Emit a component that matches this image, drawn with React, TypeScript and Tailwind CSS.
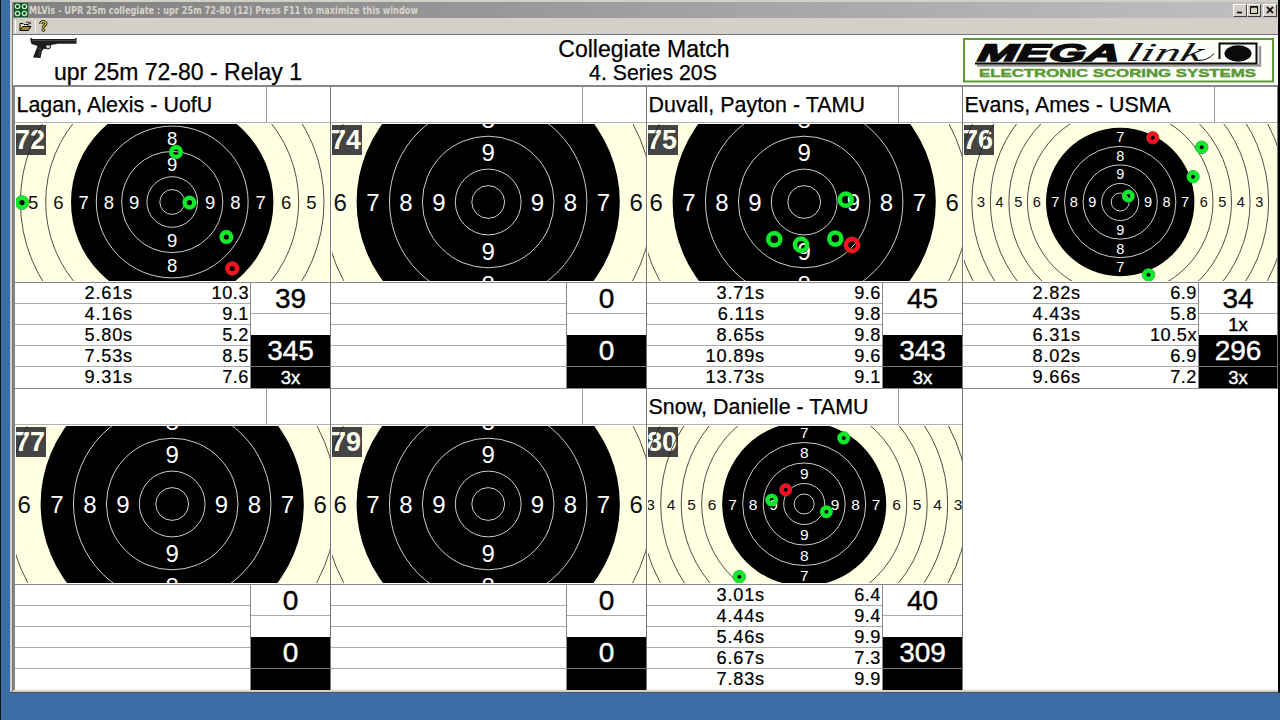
import React from "react";

type Shot = { x: number; y: number; red?: boolean };
type Row = { time: string; score: string };
type Lane = {
  id: string;
  name: string;
  step: number;
  inner: number;
  font: number;
  hole: number;
  core: number;
  shots: Shot[];
  rows: Row[];
  series: string;
  seriesX: string;
  total: string;
  totalX: string;
};

const rows = (s: string): Row[] =>
  s.split("|").map((r) => {
    const [time, score] = r.split(" ");
    return { time, score };
  });

const emptyRows: Row[] = Array.from({ length: 5 }, () => ({ time: "", score: "" }));

const emptyLane = (id: string): Lane => ({
  id, name: "", step: 32.9, inner: 16.4, font: 24, hole: 8, core: 3.6, shots: [], rows: emptyRows,
  series: "0", seriesX: "", total: "0", totalX: "",
});

const lanes: (Lane | null)[] = [
  {
    id: "72", name: "Lagan, Alexis - UofU", step: 25.3, inner: 12.4, font: 18.5, hole: 6.9, core: 2.6,
    shots: [{ x: 160, y: 28 }, { x: 173.5, y: 78.6 }, { x: 6, y: 78.6 }, { x: 210.4, y: 113 }, { x: 216.3, y: 144.5, red: true }],
    rows: rows("2.61s 10.3|4.16s 9.1|5.80s 5.2|7.53s 8.5|9.31s 7.6"),
    series: "39", seriesX: "", total: "345", totalX: "3x",
  },
  emptyLane("74"),
  {
    id: "75", name: "Duvall, Payton - TAMU", step: 32.9, inner: 16.4, font: 24, hole: 8.2, core: 3.8,
    shots: [{ x: 197.8, y: 75.7 }, { x: 126.3, y: 115.2 }, { x: 153, y: 120.7 }, { x: 187.3, y: 114.6 }, { x: 204, y: 121, red: true }],
    rows: rows("3.71s 9.6|6.11s 9.8|8.65s 9.8|10.89s 9.6|13.73s 9.1"),
    series: "45", seriesX: "", total: "343", totalX: "3x",
  },
  {
    id: "76", name: "Evans, Ames - USMA", step: 18.55, inner: 9, font: 14.5, hole: 6.3, core: 2,
    shots: [{ x: 237.7, y: 23.3 }, { x: 229, y: 52.7 }, { x: 164.3, y: 72 }, { x: 184.5, y: 150.7 }, { x: 188.7, y: 13.8, red: true }],
    rows: rows("2.82s 6.9|4.43s 5.8|6.31s 10.5x|8.02s 6.9|9.66s 7.2"),
    series: "34", seriesX: "1x", total: "296", totalX: "3x",
  },
  emptyLane("77"),
  emptyLane("79"),
  {
    id: "80", name: "Snow, Danielle - TAMU", step: 20.5, inner: 10, font: 15.5, hole: 6.3, core: 2,
    shots: [{ x: 195.7, y: 12 }, { x: 123.7, y: 74 }, { x: 178.4, y: 85.7 }, { x: 91.3, y: 150.7 }, { x: 137.7, y: 63.8, red: true }],
    rows: rows("3.01s 6.4|4.44s 9.4|5.46s 9.9|6.67s 7.3|7.83s 9.9"),
    series: "40", seriesX: "", total: "309", totalX: "",
  },
];

const CX = 156.2;
const CY = 78;

function Target({ lane }: { lane: Lane }) {
  const { step, inner, font, hole, core } = lane;
  const dy = font * 0.355;
  const values = [9, 8, 7, 6, 5, 4, 3, 2].filter((v) => (10.5 - v) * step < CX + 1);
  const upright = values.filter((v) => v >= 7 && (10.5 - v) * step < CY + 8);
  return (
    <svg width="314" height="157" viewBox="0 0 314 157" className="block bg-[#ffffe1]">
      <rect x="0" y="1" width="30" height="30" fill="#444444" />
      <text x="-1" y="25" fontSize="27" fontWeight="700" fill="#fffff0" textLength="30" lengthAdjust="spacingAndGlyphs">
        {lane.id}
      </text>
      <circle cx={CX} cy={CY} r={step * 4} fill="#000" />
      {lane.shots.map((s, i) => (
        <circle key={i} cx={s.x} cy={s.y} r={hole - 1} fill="#000" />
      ))}
      <circle cx={CX} cy={CY} r={inner} fill="none" stroke="#fff" strokeWidth="0.8" />
      {[1, 2, 3].map((n) => (
        <circle key={n} cx={CX} cy={CY} r={step * n} fill="none" stroke="#fff" strokeWidth="0.8" />
      ))}
      {[5, 6, 7, 8, 9].map((n) => (
        <circle key={n} cx={CX} cy={CY} r={step * n} fill="none" stroke="#222" strokeWidth="0.8" />
      ))}
      <g fontSize={font} textAnchor="middle">
        {values.map((v) => {
          const d = (10.5 - v) * step;
          return (
            <g key={v} fill={v >= 7 ? "#fff" : "#111"}>
              <text x={CX - d} y={CY + dy}>{v}</text>
              <text x={CX + d} y={CY + dy}>{v}</text>
            </g>
          );
        })}
        {upright.map((v) => {
          const d = (10.5 - v) * step;
          return (
            <g key={v} fill="#fff">
              <text x={CX} y={CY - d + dy}>{v}</text>
              <text x={CX} y={CY + d + dy}>{v}</text>
            </g>
          );
        })}
      </g>
      {lane.shots.map((s, i) => (
        <g key={i} fill="none">
          <circle cx={s.x} cy={s.y} r={hole} stroke="#063" strokeWidth="0.7" />
          <circle cx={s.x} cy={s.y} r={(hole + core) / 2} strokeWidth={hole - core} stroke={s.red ? "#fa1020" : "#10ea28"} />
        </g>
      ))}
    </svg>
  );
}

function Panel({ lane }: { lane: Lane }) {
  return (
    <section className="flex h-[302px] flex-col overflow-hidden border-r border-[#777] bg-white">
      <div className="flex h-[36px] shrink-0 border-b border-[#b0b0b0]">
        <div className="w-[251px] shrink-0 pl-[1.5px] pt-[3px] text-[21.4px] leading-[30px] tracking-[0.04px] whitespace-nowrap [-webkit-text-stroke:0.25px]">
          {lane.name}
        </div>
        <div className="flex-1 border-l border-[#999]" />
      </div>
      <div className="h-[160px] shrink-0 border-b border-[#888] pl-px pt-px">
        <Target lane={lane} />
      </div>
      <div className="flex h-[106px] shrink-0 border-b border-[#888]">
        <div className="flex w-[235px] shrink-0 flex-col">
          {lane.rows.map((r, i) => (
            <div
              key={i}
              className="flex h-[21px] border-b border-[#aaa] pr-px text-[18.2px] leading-[20px] last:border-0 [-webkit-text-stroke:0.2px]"
            >
              <span className="w-[118px] text-right tracking-[0.8px]">{r.time}</span>
              <span className="flex-1 text-right tracking-[0.5px]">{r.score}</span>
            </div>
          ))}
        </div>
        <div className="flex flex-1 flex-col border-l border-[#888] text-center [-webkit-text-stroke:0.4px]">
          <div className="h-[31px] shrink-0 border-b border-[#aaa] text-[28px] leading-[31px]">{lane.series}</div>
          <div className="h-[21px] shrink-0 text-[18.5px] leading-[22px]">{lane.seriesX}</div>
          <div className="h-[32px] shrink-0 border-b border-[#777] bg-black text-[28px] leading-[32px] text-white">{lane.total}</div>
          <div className="h-[21px] shrink-0 bg-black text-[18.5px] leading-[22px] text-white">{lane.totalX}</div>
        </div>
      </div>
    </section>
  );
}

function AppIcon() {
  return (
    <svg width="14" height="14" viewBox="0 0 14 14" className="ml-[2px]">
      <rect width="14" height="14" fill="#0a5a20" />
      {[[3.5, 3.5], [10.5, 3.5], [3.5, 10.5], [10.5, 10.5]].map(([x, y]) => (
        <g key={`${x}-${y}`}>
          <circle cx={x} cy={y} r="2.8" fill="#c8f0c8" />
          <circle cx={x} cy={y} r="1.4" fill="#031" />
        </g>
      ))}
    </svg>
  );
}

function WindowButton({ children }: { children: React.ReactNode }) {
  return (
    <span className="flex h-[13px] w-[14px] items-center justify-center border border-t-white border-r-[#404040] border-b-[#404040] border-l-white bg-[#d4d0c8]">
      <svg width="10" height="10" viewBox="0 0 10 10" fill="none" stroke="#000">
        {children}
      </svg>
    </span>
  );
}

function TitleBar() {
  return (
    <div className="flex h-[16px] items-center bg-linear-to-r from-[#808080] to-[#c0c0c0] pr-[1px]">
      <AppIcon />
      <svg width="400" height="16" className="ml-px">
        <text
          x="0"
          y="11.5"
          fontSize="9.8"
          fontWeight="700"
          fill="#d8d4cc"
          fontFamily="'DejaVu Sans','Noto Sans',sans-serif"
          textLength="389"
          lengthAdjust="spacingAndGlyphs"
        >
          MLVis - UPR 25m collegiate : upr 25m 72-80 (12) Press F11 to maximize this window
        </text>
      </svg>
      <div className="ml-auto flex">
        <WindowButton><path d="M2 7.5h5" strokeWidth="1.6" /></WindowButton>
        <WindowButton><path d="M1.5 1.5h7v7h-7zM1.5 2.2h7" /></WindowButton>
        <span className="w-[2px]" />
        <WindowButton><path d="M2 2l6 6M8 2l-6 6" strokeWidth="1.6" /></WindowButton>
      </div>
    </div>
  );
}

function Toolbar() {
  return (
    <div className="flex h-[17px] items-center border-b border-[#74747c] bg-[#d4d0c8] pl-[2px]">
      <span className="h-[13px] w-px bg-white" />
      <svg width="13" height="11" viewBox="0 0 13 11" className="ml-[3px]">
        <path d="M1 9.5V2.5h3l1 1h4v2" fill="#f4e890" stroke="#000" />
        <path d="M1 9.5l2.5-4h8.5l-2.8 4z" fill="#98902a" stroke="#000" />
        <path d="M7 1.5c1.5-1 3-.6 3.800.8M11.300.8v2h-2" fill="none" stroke="#000" strokeWidth="0.8" />
      </svg>
      <span className="ml-[3px] h-[13px] w-px bg-[#f4f2ec]" />
      <svg width="9" height="12" viewBox="0 0 9 12" className="ml-[3px]">
        <path d="M1.8 4C1.8 1 7 1 7 3.6 7 5.3 4.4 5.3 4.4 7.6" fill="none" stroke="#000" strokeWidth="3" />
        <path d="M1.8 4C1.8 1 7 1 7 3.6 7 5.3 4.4 5.3 4.4 7.3" fill="none" stroke="#e8d830" strokeWidth="1.3" />
        <circle cx="4.4" cy="10" r="1.5" fill="#e8d830" stroke="#000" strokeWidth="0.8" />
      </svg>
    </div>
  );
}

function Pistol() {
  return (
    <svg width="50" height="23" viewBox="0 0 50 23" className="block">
      <path
        d="M1 1.5l1.500-.5 1 1H46v-1h1.500v5.800H29l-7 1.200c.4 3-1 4.500-3.500 4.300l-3.500-.5-2 2-1.500 7.200-7.500-.6L7 13l1.500-4L2.500 7z"
        fill="#1e1e20"
      />
      <path d="M17 8.500h4c.2 2-1 3-3 2.700z" fill="#e8e8e8" />
      <path d="M3 3.500h44" stroke="#55555a" strokeWidth="0.800" />
      <path d="M8 11l3.500 1-1.700 7" fill="none" stroke="#505054" strokeWidth="0.700" />
    </svg>
  );
}

function Logo() {
  return (
    <svg width="311" height="45" viewBox="0 0 311 45" className="block">
      <rect x="1" y="1" width="309" height="42.5" fill="#fdfffa" stroke="#5b9a34" strokeWidth="2" />
      <path d="M14 27.500H297V8" fill="none" stroke="#9a9a9a" strokeWidth="2.5" />
      <path d="M12 25.500H293.500V5.500H256.500V21" fill="none" stroke="#0a0a0a" strokeWidth="2" />
      <text
        transform="translate(14 22.6) skewX(-8)"
        x="0"
        y="0"
        fontSize="24"
        fontWeight="700"
        fontStyle="italic"
        textLength="142"
        lengthAdjust="spacingAndGlyphs"
        fill="#0a0a0a"
        stroke="#0a0a0a"
        strokeWidth="1.5"
      >
        MEGA
      </text>
      <text
        transform="translate(162 22.8) skewX(-16)"
        x="0"
        y="0"
        fontSize="26"
        fontStyle="italic"
        fontFamily="'Liberation Serif','Times New Roman',serif"
        textLength="76"
        lengthAdjust="spacingAndGlyphs"
        fill="#111"
      >
        link
      </text>
      <path d="M236 22.300q8 .5 15-6.500" fill="none" stroke="#111" strokeWidth="1" />
      <ellipse cx="275" cy="15.500" rx="13.500" ry="8.300" fill="#0a0a0a" />
      <text x="16" y="39.300" fontSize="10.3" fontWeight="700" textLength="277" lengthAdjust="spacingAndGlyphs" fill="#5b9a34" stroke="#5b9a34" strokeWidth="0.4">
        ELECTRONIC SCORING SYSTEMS
      </text>
    </svg>
  );
}

function Header() {
  return (
    <header className="flex h-[52px] shrink-0 border-b-2 border-[#888] bg-white [-webkit-text-stroke:0.25px]">
      <div className="w-[435px] pl-[16px] pt-[2px]">
        <Pistol />
        <div className="-mt-px pl-[25px] text-[23px] leading-[26px] whitespace-nowrap">upr 25m 72-80 - Relay 1</div>
      </div>
      <div className="w-[392px] pt-[1px] text-center">
        <div className="text-[23px] leading-[26px]">Collegiate Match</div>
        <div className="pl-[18px] text-[21.3px] leading-[23px]">4. Series 20S</div>
      </div>
      <div className="ml-auto pr-[4px] pt-[3px]">
        <Logo />
      </div>
    </header>
  );
}

export default function App() {
  return (
    <div className="h-[720px] w-[1280px] overflow-hidden border-l border-[#101828] bg-[#3a6ea5] pl-[9px] font-['Liberation_Sans',Arial,sans-serif] text-black">
      <div className="flex h-[693px] flex-col border-r-2 border-b border-r-black border-b-[#505458] bg-[#d4d0c8] pt-[2px]">
        <div className="ml-[2px]">
          <TitleBar />
        </div>
        <div className="ml-[2px] flex min-h-0 flex-1 flex-col border-l border-[#777] bg-white">
          <Toolbar />
          <Header />
          <main className="grid h-[603px] shrink-0 grid-cols-[316px_316px_316px_315px] content-start overflow-hidden border-l-2 border-[#858280]">
            {lanes.map((l) => l && <Panel key={l.id} lane={l} />)}
          </main>
          <div className="h-[2px] bg-[#d4d0c8]" />
        </div>
      </div>
    </div>
  );
}
